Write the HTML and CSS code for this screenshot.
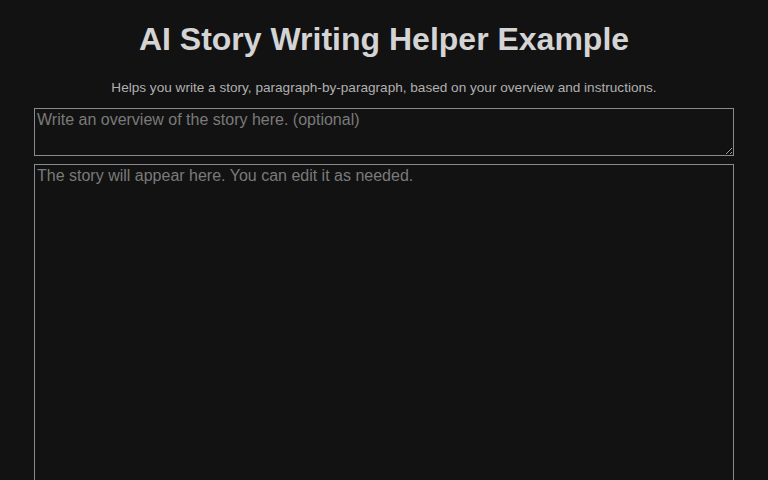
FILE: index.html
```html
<!DOCTYPE html>
<html lang="en">

<head>
    <meta charset="UTF-8">
    <meta name="viewport" content="width=device-width, initial-scale=1.0">
    <title>AI Story Writing Helper Example</title>
    <link rel="stylesheet" href="styles.css">
</head>

<body>
    <div class="page">
        <h1 class="title">AI Story Writing Helper Example</h1>
        <p class="intro">Helps you write a story, paragraph-by-paragraph, based on your overview and instructions.</p>
        <textarea id="overview" class="overview" placeholder="Write an overview of the story here. (optional)"></textarea>
        <textarea id="story" class="story" placeholder="The story will appear here. You can edit it as needed."></textarea>
    </div>
</body>

</html>
```

FILE: styles.css
```css
body {
    margin: 0;
    background-color: #121212;
    color: #dcdcdc;
    font-family: "Liberation Sans", Arial, sans-serif;
}

.page {
    width: 700px;
    margin: 0 auto;
    display: flex;
    flex-direction: column;
}

.title {
    margin: 21px 0 0;
    font-size: 32px;
    text-align: center;
    color: #d4d4d4;
}

.intro {
    margin: 22px 0 13px;
    font-size: 13.6px;
    text-align: center;
    color: #b0b0b0;
}

textarea {
    box-sizing: border-box;
    width: 100%;
    padding: 2px;
    background-color: transparent;
    color: #dcdcdc;
    border: 1px solid #8a8a8a;
    font-family: "Liberation Sans", Arial, sans-serif;
    font-size: 16px;
}

textarea::placeholder {
    color: #7a7a7a;
}

.overview {
    height: 48px;
}

.story {
    margin-top: 8px;
    height: 400px;
}
```
